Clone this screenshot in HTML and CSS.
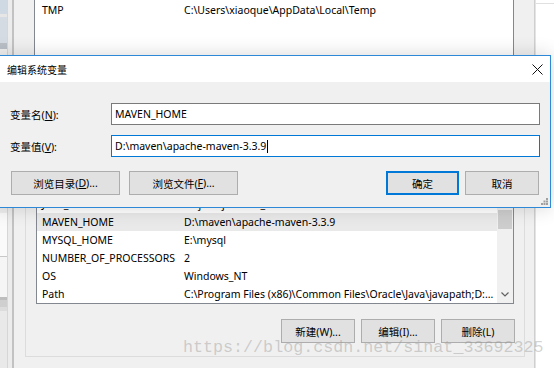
FILE: index.html
```html
<!DOCTYPE html>
<html>
<head>
<meta charset="utf-8">
<link rel="stylesheet" href="styles.css">
</head>
<body>
<div class="screen">
  <div class="side">
    <div class="side-col">
      <div class="s-blue1"></div>
      <div class="s-gap"></div>
      <div class="s-blue2"></div>
      <div class="s-dark"></div>
      <div class="s-plain1"></div>
      <div class="s-white"></div>
      <div class="s-plain2"></div>
      <div class="s-bands"></div>
      <div class="s-plain3"></div>
    </div>
  </div>
  <div class="win">
    <div class="userlist">
      <div class="row"><span class="c1">TMP</span><span class="c2">C:\Users\xiaoque\AppData\Local\Temp</span></div>
    </div>
    <div class="group">
      <div class="syslist">
        <div class="rows">
          <div class="row"><span class="c1">JAVA_HOME</span><span class="c2">D:\java\jdk1.8.0_151</span></div>
          <div class="row sel"><span class="c1">MAVEN_HOME</span><span class="c2">D:\maven\apache-maven-3.3.9</span></div>
          <div class="row"><span class="c1">MYSQL_HOME</span><span class="c2">E:\mysql</span></div>
          <div class="row"><span class="c1">NUMBER_OF_PROCESSORS</span><span class="c2">2</span></div>
          <div class="row"><span class="c1">OS</span><span class="c2">Windows_NT</span></div>
          <div class="row"><span class="c1">Path</span><span class="c2">C:\Program Files (x86)\Common Files\Oracle\Java\javapath;D:...</span></div>
        </div>
        <div class="vscroll">
          <div class="thumb"></div>
          <div class="track"></div>
          <div class="arrow">
            <svg width="8" height="5" viewBox="0 0 8 5"><path d="M0.5 0.5 L4 4 L7.5 0.5" fill="none" stroke="#606060" stroke-width="1.2"/></svg>
          </div>
        </div>
      </div>
      <div class="btnrow">
        <div class="btn">新建(W)...</div>
        <div class="btn">编辑(I)...</div>
        <div class="btn">删除(L)</div>
      </div>
    </div>
  </div>
  <div class="rightstrip"></div>

  <div class="dialog">
    <div class="titlebar">
      <span class="title">编辑系统变量</span>
      <svg class="close" width="11" height="11" viewBox="0 0 11 11"><path d="M0.5 0.5 L10.5 10.5 M10.5 0.5 L0.5 10.5" stroke="#111" stroke-width="1"/></svg>
    </div>
    <div class="dbody">
      <div class="frow">
        <span class="label">变量名(<u>N</u>):</span>
        <div class="input">MAVEN_HOME</div>
      </div>
      <div class="frow">
        <span class="label">变量值(<u>V</u>):</span>
        <div class="input focus">D:\maven\apache-maven-3.3.9<span class="caret"></span></div>
      </div>
      <div class="drow">
        <div class="dbtn wide">浏览目录(<u>D</u>)...</div>
        <div class="dbtn wide">浏览文件(<u>F</u>)...</div>
        <div class="spacer"></div>
        <div class="dbtn ok">确定</div>
        <div class="dbtn cancel">取消</div>
      </div>
    </div>
    <div class="grip">
      <svg width="7" height="7" viewBox="0 0 7 7"><g fill="#a0a0a0"><rect x="5" y="0" width="2" height="2"/><rect x="2.5" y="2.5" width="2" height="2"/><rect x="5" y="2.5" width="2" height="2"/><rect x="0" y="5" width="2" height="2"/><rect x="2.5" y="5" width="2" height="2"/><rect x="5" y="5" width="2" height="2"/></g></svg>
    </div>
  </div>

  <div class="watermark">https://blog.csdn.net/sinat_33692325</div>
</div>
</body>
</html>
```

FILE: styles.css
```css
* { box-sizing: border-box; }
html, body { margin: 0; padding: 0; }
body {
  font-family: "Noto Sans", "Noto Sans CJK SC", sans-serif;
  font-size: 10.5px;
  color: #000;
  background: #f0f0f0;
}
.screen {
  position: relative;
  width: 554px;
  height: 368px;
  overflow: hidden;
  display: flex;
  background: #f0f0f0;
}

/* left strip: part of another window */
.side {
  width: 12px;
  flex: none;
  display: flex;
  background: #ececec;
}
.side-col { width: 8px; display: flex; flex-direction: column; border-right: 1px solid #d6d6d6; }
.s-blue1 { height: 14px; background: #cfd9e3; }
.s-gap { height: 3px; background: #e6e6e6; }
.s-blue2 { height: 26px; background: #d5dbe2; }
.s-dark { height: 6px; background: #b9bfc6; }
.s-plain1 { height: 150px; background: #f0f0f0; }
.s-white { height: 58px; background: #fafafa; border-top: 14px solid #eeeeee; border-bottom: 1px solid #c8c8c8; }
.s-plain2 { height: 40px; background: #f5f5f5; }
.s-bands { height: 14px; background: #cfcfcf; border-top: 3px solid #bdbdbd; border-bottom: 4px solid #dcdcdc; }
.s-plain3 { flex: 1; background: #e9e9e9; }

/* background window */
.win {
  width: 523px;
  flex: none;
  border-left: 2px solid #c2c2c2;
  border-right: 1px solid #cfcfcf;
  background: #f0f0f0;
  display: flex;
  flex-direction: column;
}
.userlist {
  margin: -1px 20px 0 20px;
  height: 56px;
  background: #fff;
  border: 1px solid #828790;
  border-bottom: none;
  padding: 1px 0 0 7px;
}
.row {
  height: 18px;
  line-height: 18px;
  display: flex;
  white-space: nowrap;
}
.c1 { width: 142px; flex: none; }
.c2 { flex: none; }

.group {
  margin: 115px 9px 0 11px;
  border: 1px solid #dcdcdc;
  padding: 23px 10px 13px 10px;
}
.syslist {
  height: 110px;
  background: #fff;
  border: 1px solid #828790;
  display: flex;
  overflow: hidden;
}
.rows { flex: 1; overflow: hidden; }
.syslist .row { padding-left: 5px; }
.syslist .row.sel { background: #e9e9e9; }
.vscroll {
  width: 16px;
  flex: none;
  background: #f0f0f0;
  display: flex;
  flex-direction: column;
  padding-top: 15px;
}
.thumb { height: 19px; margin: 0 1px; background: #cdcdcd; }
.track { flex: 1; }
.arrow { height: 16px; display: flex; align-items: center; justify-content: center; padding-bottom: 2px; }

.btnrow {
  margin-top: 15px;
  display: flex;
  justify-content: flex-end;
  gap: 6px;
  margin-right: -1px;
}
.btn {
  width: 74px;
  height: 24px;
  background: #e1e1e1;
  border: 1px solid #adadad;
  display: flex;
  align-items: center;
  justify-content: center;
  white-space: nowrap;
}

.rightstrip {
  flex: 1;
  background: #fff;
  border-left: 1px solid #e4e4e4;
  margin-top: 0;
  box-shadow: inset 0 3px 0 #fff, inset 0 4px 0 #e0e0e0;
}

/* dialog */
.dialog {
  position: absolute;
  left: -10px;
  top: 55px;
  width: 561px;
  height: 153px;
  border: 1px solid #2d88d8;
  background: #f0f0f0;
  box-shadow: 0 0 18px rgba(0, 0, 0, 0.16);
  display: flex;
  flex-direction: column;
}
.titlebar {
  height: 26px;
  flex: none;
  background: #fff;
  display: flex;
  align-items: center;
  justify-content: space-between;
  padding: 0 7px 0 16px;
}
.title { font-size: 10px; }
.close { display: block; }
.dbody {
  padding: 21px 10px 0 19px;
  display: flex;
  flex-direction: column;
  gap: 10px;
}
.frow { display: flex; align-items: center; height: 22px; }
.label { width: 101px; flex: none; white-space: nowrap; }
.input {
  width: 430px;
  height: 22px;
  background: #fff;
  border: 1px solid #7a7a7a;
  padding-left: 3px;
  display: flex;
  align-items: center;
  white-space: nowrap;
}
.input.focus { border-color: #0078d7; }
.caret { display: inline-block; width: 1px; height: 13px; background: #000; margin-left: 1px; }
.drow {
  margin-top: 4px;
  display: flex;
  align-items: center;
  padding-left: 1px;
  padding-right: 1px;
}
.dbtn {
  height: 24px;
  background: #e1e1e1;
  border: 1px solid #adadad;
  display: flex;
  align-items: center;
  justify-content: center;
  white-space: nowrap;
}
.dbtn.wide { width: 109px; margin-right: 9px; }
.spacer { flex: 1; }
.dbtn.ok { width: 73px; border-color: #0078d7; box-shadow: inset 0 0 0 1px #0078d7; margin-right: 6px; }
.dbtn.cancel { width: 74px; }
.grip {
  position: absolute;
  right: 2px;
  bottom: 2px;
  display: flex;
}

.watermark {
  position: absolute;
  left: 183px;
  top: 337px;
  font-family: "Liberation Mono", monospace;
  font-size: 16.7px;
  line-height: 22px;
  color: rgba(150, 150, 150, 0.42);
  white-space: nowrap;
  pointer-events: none;
}
```
